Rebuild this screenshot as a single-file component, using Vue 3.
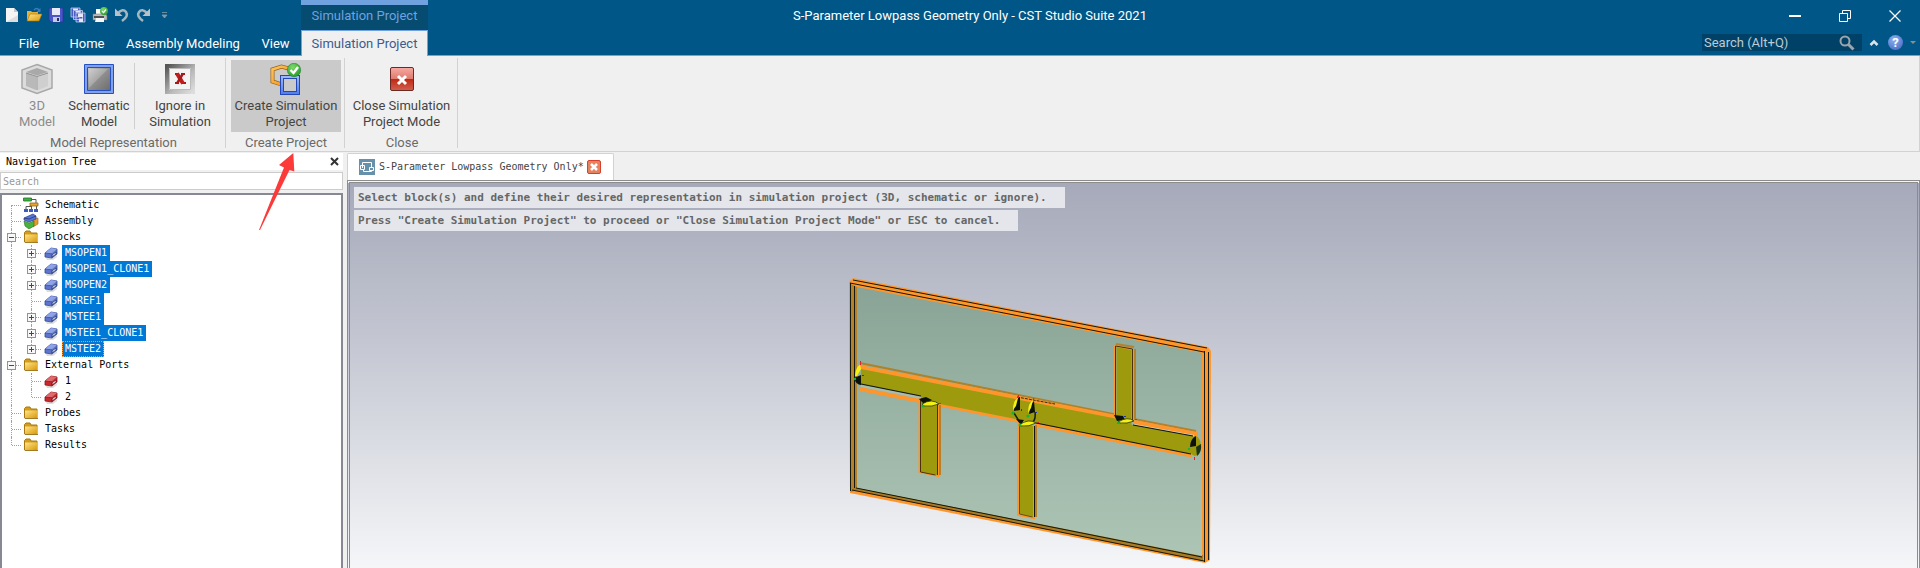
<script setup>
import { ref } from 'vue'

const quickActions = [
  { id: 'new', label: 'New' },
  { id: 'open', label: 'Open' },
  { id: 'save', label: 'Save' },
  { id: 'saveall', label: 'Save all' },
  { id: 'print', label: 'Print' },
  { id: 'undo', label: 'Undo' },
  { id: 'redo', label: 'Redo' },
]

const tabs = [
  { name: 'File', cls: 'tab-file' },
  { name: 'Home', cls: 'tab-home' },
  { name: 'Assembly Modeling', cls: 'tab-assembly' },
  { name: 'View', cls: 'tab-view' },
]

const block = (label, toggle = '+') => ({ label, toggle, icon: 'block', depth: 1, selected: true })
const rows = [
  { label: 'Schematic', icon: 'schematic', depth: 0, first: true },
  { label: 'Assembly', icon: 'assembly', depth: 0 },
  { label: 'Blocks', icon: 'folder', depth: 0, toggle: '-' },
  block('MSOPEN1'),
  block('MSOPEN1_CLONE1'),
  block('MSOPEN2'),
  block('MSREF1', ''),
  block('MSTEE1'),
  block('MSTEE1_CLONE1'),
  { ...block('MSTEE2'), last: true, focused: true },
  { label: 'External Ports', icon: 'folder', depth: 0, toggle: '-' },
  { label: '1', icon: 'port', depth: 1 },
  { label: '2', icon: 'port', depth: 1, last: true },
  { label: 'Probes', icon: 'folder', depth: 0 },
  { label: 'Tasks', icon: 'folder', depth: 0 },
  { label: 'Results', icon: 'folder', depth: 0, last: true },
]

const commandQuery = ref('')
const treeQuery = ref('')
</script>

<template>
  <div class="app">
    <svg class="sprite" aria-hidden="true">
      <defs>
        <linearGradient id="gGold" x1="0" y1="0" x2="1" y2="1"><stop offset="0" stop-color="#ffe58a" /><stop offset="1" stop-color="#d99a0c" /></linearGradient>
        <linearGradient id="gGrey" x1="0" y1="0" x2="1" y2="1"><stop offset="0" stop-color="#c9c9c9" /><stop offset=".5" stop-color="#8e8e8e" /><stop offset="1" stop-color="#6c6c6c" /></linearGradient>
        <linearGradient id="gFrame" x1="0" y1="0" x2="1" y2="1"><stop offset="0" stop-color="#555" /><stop offset=".6" stop-color="#bbb" /><stop offset="1" stop-color="#ddd" /></linearGradient>
        <linearGradient id="gRed" x1="0" y1="0" x2="0" y2="1"><stop offset="0" stop-color="#f6aba4" /><stop offset=".5" stop-color="#e0796c" /><stop offset=".52" stop-color="#c02a16" /><stop offset="1" stop-color="#d26050" /></linearGradient>
        <linearGradient id="gBlue" x1="0" y1="0" x2="0" y2="1"><stop offset="0" stop-color="#9db8f7" /><stop offset="1" stop-color="#5580ec" /></linearGradient>
        <linearGradient id="gOrange" x1="0" y1="0" x2="1" y2="1"><stop offset="0" stop-color="#ffc35c" /><stop offset="1" stop-color="#f09216" /></linearGradient>
        <radialGradient id="gGreen" cx=".4" cy=".3" r=".8"><stop offset="0" stop-color="#7edb6a" /><stop offset="1" stop-color="#209425" /></radialGradient>
      </defs>

      <symbol id="new" viewBox="0 0 16 16"><path d="M2 1h8l4 4v10H2z" fill="#f5f5f5" /><path d="M10 1l4 4h-4z" fill="#c4c9cd" /><path d="M2 15h12V8z" fill="#dedede" /></symbol>
      <symbol id="open" viewBox="0 0 16 16"><path d="M1 14V4h4l1 1h6v3H4z" fill="#e6b032" /><path d="M1 14l3-7h12l-3 7z" fill="url(#gGold)" stroke="#a8740d" stroke-width=".6" /><path d="M8 3q3-3 5 0" fill="none" stroke="#3a7fc0" stroke-width="1.4" /><path d="M14.500 1v4h-4z" fill="#3a7fc0" /></symbol>
      <symbol id="save" viewBox="0 0 16 16"><path d="M1 1h14v14H3l-2-2z" fill="#4a57c9" stroke="#2a3595" stroke-width=".8" /><path d="M4 1h8v7H4z" fill="#e8ebf8" /><path d="M5 10h7v5H5z" fill="#c9cce0" /><path d="M9 11h2v3H9z" fill="#23296b" /></symbol>
      <symbol id="saveall" viewBox="0 0 16 16"><g fill="#4b5cc5" stroke="#d7dcf5" stroke-width=".7"><path d="M1 1h9v9H1zM3.500 3.500h9v9h-9zM6 6h9v9H6z" /></g><path d="M8 6.500h5v3.500H8zM3 1.500h5v1.500H3zM5.500 4h5v1.500h-5zM9 11.500h4V15H9z" fill="#e6e9f8" /></symbol>
      <symbol id="print" viewBox="0 0 16 16"><path d="M4 2h7v6H4z" fill="#fff" /><path d="M1 7h13l1 2v4H1z" fill="#b9bcbe" stroke="#6e7274" stroke-width=".5" /><path d="M2 9h10v2H2z" fill="#4d5254" /><path d="M4 11h8v4H3z" fill="#f7f7f7" /><circle cx="12" cy="4" r="4" fill="url(#gGreen)" /><path d="M10 4l1.600 1.600L14 2.500" fill="none" stroke="#fff" stroke-width="1.300" /></symbol>
      <symbol id="undo" viewBox="0 0 16 16"><path d="M4 6q5-5 8-1 3 4-4 9" fill="none" stroke="#a9b5bc" stroke-width="2.600" /><path d="M1 1.500V9h7.500z" fill="#b7c2c8" /></symbol>
      <symbol id="redo" viewBox="0 0 16 16"><path d="M11 6q-5-5-8-1-3 4 4 9" fill="none" stroke="#a9b5bc" stroke-width="2.600" /><path d="M14 1.500V9H6.500z" fill="#b7c2c8" /></symbol>

      <symbol id="cube" viewBox="0 0 34 32"><path d="M17 1.500L32 7v18L17 30.500 2 25V7z" fill="#dcdcdc" stroke="#a8a8a8" stroke-width="1.500" /><path d="M6 9l11-4 11 4-11 3.500z" fill="#a9a9a9" /><path d="M6 10l10 3.500V27L6 23z" fill="#b9b9b9" /><path d="M28 10l-10 3.500V27l10-4z" fill="#cfcfcf" /><path d="M6 10l11 3.500 11-3.500M17 13v14" fill="none" stroke="#929292" /></symbol>
      <symbol id="square" viewBox="0 0 32 32"><path d="M1.500 1.500h29v29h-29z" fill="#81a1ed" stroke="#2450c3" /><path d="M4.500 4.500h23v23h-23z" fill="url(#gGrey)" stroke="#2450c3" /><path d="M6 25L25 6H6z" fill="#fff" opacity=".2" /></symbol>
      <symbol id="ignore" viewBox="0 0 32 32"><path d="M3 3h26v26H3z" fill="#f3f3f3" stroke="url(#gFrame)" stroke-width="4" /><path d="M5.500 5.500h21v21h-21z" fill="none" stroke="#bbb" /><path d="M11 11h4M17 11h4M11 20h4M17 20h5" stroke="#b01719" stroke-width="2" /><path d="M13 10.500l6 10" stroke="#c01c1c" stroke-width="4" /><path d="M19 10.500l-6 10" stroke="#a81919" stroke-width="2.500" /></symbol>
      <symbol id="create" viewBox="0 0 32 32"><path d="M2.500 6.500l9-3 11 3v11l-11 4-9-3z" fill="none" stroke="#9c6113" stroke-width="4" /><path d="M2.500 6.500l9-3 11 3v11l-11 4-9-3z" fill="none" stroke="url(#gOrange)" stroke-width="2.600" /><path d="M13.500 15.500h13v13h-13z" fill="#cacaca" /><path d="M12 14h16v16H12z" fill="none" stroke="#2447b8" stroke-width="4" /><path d="M12 14h16v16H12z" fill="none" stroke="url(#gBlue)" stroke-width="2" /><circle cx="24" cy="7" r="6.700" fill="url(#gGreen)" stroke="#23852a" stroke-width=".6" /><path d="M20.500 7l3 3 4.500-6" fill="none" stroke="#fff" stroke-width="2.400" /></symbol>
      <symbol id="close" viewBox="0 0 32 32"><rect x="4.500" y="4.500" width="23" height="23" rx="1.500" fill="url(#gRed)" stroke="#6b2b25" /><path d="M12 13l8 8m0-8l-8 8" stroke="#fff" stroke-width="3" /></symbol>

      <symbol id="folder" viewBox="0 0 16 16"><path d="M1.500 13V3.500L3 2h4l1 2h6v9z" fill="#d59c18" stroke="#a9780f" /><path d="M2 5.500h12V13H2z" fill="url(#gGold)" /><path d="M2 13.500h13" stroke="#a37a24" /></symbol>
      <symbol id="schematic" viewBox="0 0 16 16"><path d="M8 2.500h5V6M3 12V9.500h5M8.500 9v3M13.500 9v3" fill="none" stroke="#555" /><path d="M.5 1h8v3h-8z" fill="#3fae3f" stroke="#23722a" stroke-width=".8" /><path d="M7 6h8v3H7z" fill="#e5a52c" stroke="#94660e" stroke-width=".8" /><path d="M1 12h4v3H1zM6 12h4v3H6zM11 12h4v3h-4z" fill="#3b5bc0" /></symbol>
      <symbol id="assembly" viewBox="0 0 16 16"><path d="M10 6l5-1v6l-5 3z" fill="#e49b25" stroke="#a46a12" stroke-width=".6" /><path d="M1 8l5 2 5-2v5l-5 3-4-3z" fill="#48b33d" stroke="#24711f" stroke-width=".6" /><path d="M1 5l9-4 3 2v3L6 9 1 7z" fill="#5775d5" stroke="#263c8b" stroke-width=".7" /><path d="M1 5l5 1 7-3" fill="none" stroke="#1e2f70" stroke-width=".7" /></symbol>
      <symbol id="block" viewBox="0 0 16 16"><path d="M3 13h7l4-3v2l-4 3H4z" fill="#bbb" opacity=".5" /><path d="M2 8l6-5 6 1v5l-5 4-7-1z" fill="#5c75cc" stroke="#314891" stroke-width=".8" /><path d="M2 8l6-5 6 1-5 4z" fill="#8ea3e6" /><path d="M9 10l4-3v2l-4 3z" fill="#e8ecf8" stroke="#23326c" stroke-width=".7" /><path d="M2 8l7 1v4" fill="none" stroke="#384e9c" stroke-width=".6" /></symbol>
      <symbol id="port" viewBox="0 0 16 16"><path d="M3 13h7l4-3v2l-4 3H4z" fill="#bbb" opacity=".5" /><path d="M2 8l6-5 6 1v5l-5 4-7-1z" fill="#c62a30" stroke="#86151a" stroke-width=".8" /><path d="M2 8l6-5 6 1-5 4z" fill="#dd6a6e" /><path d="M9 10l4-3v2l-4 3z" fill="#fff" stroke="#6d1014" stroke-width=".7" /><path d="M2 8l7 1v4" fill="none" stroke="#98191d" stroke-width=".6" /></symbol>
    </svg>

    <header class="titlebar">
      <div class="title-left">
        <div class="quick">
          <button v-for="a in quickActions" :key="a.id" type="button" :aria-label="a.label">
            <svg width="16" height="16"><use :href="'#' + a.id" /></svg>
          </button>
          <button type="button" class="quick-more" aria-label="Customize toolbar">
            <svg width="7" height="8" viewBox="0 0 7 8"><path d="M1 1.500h5M1 4l2.500 3L6 4z" fill="#8799a5" stroke="#8799a5" stroke-width=".8" /></svg>
          </button>
        </div>
        <div class="context">Simulation Project</div>
      </div>
      <h1>S-Parameter Lowpass Geometry Only - CST Studio Suite 2021</h1>
      <div class="window-controls">
        <button type="button" aria-label="Minimize"><svg width="12" height="12"><path d="M0 6h12" stroke="#fff" stroke-width="2" /></svg></button>
        <button type="button" aria-label="Restore"><svg width="12" height="12" fill="none" stroke="#fff"><path d="M.5 3.500h8v8h-8zM3.500 3V.5h8v8H9" /></svg></button>
        <button type="button" aria-label="Close"><svg width="12" height="12"><path d="M.5.5l11 11m0-11l-11 11" stroke="#fff" stroke-width="1.200" /></svg></button>
      </div>
    </header>

    <nav class="tabs">
      <button v-for="t in tabs" :key="t.name" type="button" :class="t.cls">{{ t.name }}</button>
      <button type="button" class="active">Simulation Project</button>
      <div class="tab-tools">
        <label class="command-search">
          <input v-model="commandQuery" type="text" placeholder="Search (Alt+Q)" aria-label="Search commands" />
          <svg width="16" height="16" fill="none" stroke="#9aa5ac"><circle cx="6" cy="6" r="4.500" stroke-width="2" /><path d="M9.500 9.500l5 5" stroke-width="3" /></svg>
        </label>
        <button type="button" class="collapse" aria-label="Collapse ribbon"><svg width="10" height="8"><path d="M1.500 6L5 2.500 8.500 6" fill="none" stroke="#dbe3e8" stroke-width="2.500" /></svg></button>
        <button type="button" class="help" aria-label="Help">?</button>
        <button type="button" class="help-more" aria-label="Help menu"><svg width="6" height="4"><path d="M0 0h6L3 3z" fill="#8c8c8c" /></svg></button>
      </div>
    </nav>

    <section class="ribbon">
      <div class="group group-model">
        <div class="commands">
          <button type="button" class="cmd cmd-3d" disabled><svg width="34" height="32"><use href="#cube" /></svg><span>3D<br />Model</span></button>
          <button type="button" class="cmd cmd-schematic"><svg width="32" height="32"><use href="#square" /></svg><span>Schematic<br />Model</span></button>
          <i class="divider"></i>
          <button type="button" class="cmd cmd-ignore"><svg width="32" height="32"><use href="#ignore" /></svg><span>Ignore in<br />Simulation</span></button>
        </div>
        <h2>Model Representation</h2>
      </div>
      <div class="group group-create">
        <div class="commands">
          <button type="button" class="cmd cmd-create"><svg width="32" height="32"><use href="#create" /></svg><span>Create Simulation<br />Project</span></button>
        </div>
        <h2>Create Project</h2>
      </div>
      <div class="group group-close">
        <div class="commands">
          <button type="button" class="cmd cmd-close"><svg width="32" height="32"><use href="#close" /></svg><span>Close Simulation<br />Project Mode</span></button>
        </div>
        <h2>Close</h2>
      </div>
    </section>

    <main class="workspace">
      <aside class="nav">
        <div class="nav-head">
          <h2>Navigation Tree</h2>
          <button type="button" aria-label="Close navigation tree"><svg width="9" height="9"><path d="M1 1l7 7m0-7L1 8" stroke="#333" stroke-width="2" /></svg></button>
        </div>
        <input v-model="treeQuery" class="nav-search" type="text" placeholder="Search" aria-label="Search the tree" />
        <ul class="tree">
          <li v-for="r in rows" :key="r.label">
            <span v-if="r.depth" class="gutter pass"></span>
            <span class="gutter branch" :class="{ start: r.first, end: r.last }">
              <button v-if="r.toggle" type="button" :aria-label="'Toggle ' + r.label">
                <svg width="9" height="9"><path :d="r.toggle === '+' ? 'M2 4.500h5M4.500 2v5' : 'M2 4.500h5'" stroke="#2c4a9b" /></svg>
              </button>
            </span>
            <svg class="node-icon" width="16" height="16"><use :href="'#' + r.icon" /></svg>
            <span class="label" :class="{ selected: r.selected, focused: r.focused }">{{ r.label }}</span>
          </li>
        </ul>
      </aside>

      <section class="document">
        <div class="doc-tab">
          <svg width="16" height="16" fill="none" stroke="#fff"><path d="M0 0h16v16H0z" fill="#6791aa" stroke="none" /><path d="M3.500 9V3.500h9V8M4.500 11v1.500h8v-1M1.500 6.500h4v4h-4zM10.500 8.500h4v3h-4z" /></svg>
          <span>S-Parameter Lowpass Geometry Only*</span>
          <button type="button" aria-label="Close document"><svg width="14" height="14"><rect x=".5" y=".5" width="13" height="13" rx="1.500" fill="#e58260" stroke="#d6402c" /><path d="M4 4l6 6m0-6l-6 6" stroke="#fff" stroke-width="2.500" /></svg></button>
        </div>
        <div class="viewport">
          <svg class="model" viewBox="350 183 1567 384" preserveAspectRatio="xMidYMin meet" role="img" aria-label="Lowpass filter model">
            <defs>
              <linearGradient id="gGlass" x1="0" y1="0" x2="0" y2="1"><stop offset="0" stop-color="#89a496" /><stop offset="1" stop-color="#adc5b5" /></linearGradient>
            </defs>
            <path d="M849 282l4-4 355 69 3 4-1 209-5 3-355-70z" fill="#ff962b" />
            <path d="M851 284l6 3v203l-6 2z" fill="#b5822a" />
            <path d="M852 490l5-4 346 69v6z" fill="#a87b24" />
            <path d="M857 287l345 66v203l-345-68z" fill="url(#gGlass)" />
            <g fill="none" stroke="#15180b">
              <path d="M850.500 283v208M854.500 286v202" />
              <path d="M853 280l354 68M850 283l354 69" />
              <path d="M1204.500 351v211M1208.500 352v208" />
              <path d="M852 490l352 71M856 488l346 69" />
            </g>

            <path d="M860 363l258 52" stroke="#ad8228" stroke-width="2" />
            <path d="M860 367l256 50" stroke="#ff962b" stroke-width="4" />
            <path d="M860 389l60 12" stroke="#ff962b" stroke-width="4" />
            <path d="M861 386l60 12" stroke="#a7bcab" stroke-width="2" />
            <path d="M940 405l78 16M1036 425l156 31" stroke="#ff962b" stroke-width="3" />
            <path d="M1134 419l62 12" stroke="#b5822a" stroke-width="2" />
            <path d="M1134 422l62 12v4" fill="none" stroke="#ff962b" stroke-width="4" />
            <path d="M1134 425l60 11" stroke="#c9d8ce" stroke-width="2" />

            <path d="M919.500 398v74l19 4V404" fill="none" stroke="#ff962b" stroke-width="2" />
            <path d="M940 405v70" stroke="#b5822a" stroke-width="2" />
            <path d="M921 395l16 6v74l-16-3z" fill="#9d9b0d" />
            <path d="M920.500 399v73l15 3M937.500 404v71" fill="none" stroke="#4d3010" />
            <path d="M1018 422v93l16 3v-93" fill="none" stroke="#ff962b" stroke-width="2" />
            <path d="M1036 425v92" stroke="#b5822a" stroke-width="2" />
            <path d="M1020 422l13 4v91l-13-3z" fill="#9d9b0d" />
            <path d="M1019.500 424v90l13 3" fill="none" stroke="#6b4a12" />
            <path d="M1034.500 426v91" stroke="#15100a" />
            <path d="M1116 344l18 3" stroke="#b5822a" stroke-width="2" />
            <path d="M1135 349v71" stroke="#b5822a" stroke-width="2" />
            <path d="M1115 419v-73l18 4v70" fill="none" stroke="#ff962b" stroke-width="2" />
            <path d="M1116.500 347l15 3v75l-15-7z" fill="#9d9b0d" />
            <path d="M1115.500 416v-70l17 3v73" fill="none" stroke="#4a3010" />

            <path d="M861 369l252 49 20 7 60 11-2 18-251-50-19-8-60-12z" fill="#9d9b0d" />
            <path d="M861 384l60 12M1133 425l60 11M1036 423l155 31" fill="none" stroke="#111" stroke-width="1.200" />
            <path d="M1017 397l38 7" stroke="#3a2c10" stroke-dasharray="3 1" />

            <path d="M855 376q1-10 5-11l1 4-4 7z" fill="#f4f113" /><path d="M854 378l7-3v10q-5 0-7-7z" fill="#0b120c" />
            <path d="M919 399l7-2 6 3-8 4z" fill="#0b120c" /><path d="M922 404q10-6 17 0-7 3-15 2z" fill="#f4f113" stroke="#26330e" stroke-width=".8" />
            <path d="M1014 411q0-11 6-14v13zM1029 414q1-10 5-13l1 11z" fill="#0b120c" /><path d="M1013 410q0-10 5-12l-2 8zM1028 413q0-10 5-13l-2 8z" fill="#f4f113" />
            <path d="M1014 413l5 8M1035 412q1 8-3 11" fill="none" stroke="#10200f" stroke-width="1.500" />
            <path d="M1016 419l8 1-3 5z" fill="#0b120c" /><path d="M1019 425q10-7 17-2-7 4-15 3z" fill="#f4f113" stroke="#26330e" stroke-width=".8" />
            <path d="M1114 415l9 1 2 4-8 1z" fill="#0b120c" /><path d="M1118 422q10-6 16-1-7 3-14 2z" fill="#f4f113" stroke="#26330e" stroke-width=".8" />
            <ellipse cx="1195" cy="446" rx="6" ry="10" fill="#9d9b0d" /><path d="M1190 447q0-8 6-11v10z" fill="#0b120c" /><path d="M1196 447l5-3q1 8-4 12z" fill="#18351a" />
            <g fill="#e5222a"><path d="M860 361h1v4h-1zM939 403h2v1h-2zM1018 395h1v3h-1zM1033 398h1v3h-1zM1037 422h2v1h-2zM1135 419h2v1h-2zM1194 457h1v3h-1z" /></g>
            <g fill="#13b43b"><circle cx="855" cy="379" r="1.200" /><circle cx="923" cy="406" r="1.500" /><circle cx="1013" cy="413" r="1.500" /><circle cx="1028" cy="416" r="1.500" /><circle cx="1020" cy="425" r="1.500" /><circle cx="1118" cy="423" r="1.200" /><circle cx="1189" cy="449" r="1.200" /></g>
            <g fill="#2033c0"><path d="M862 375h2v1h-2zM1021 409h1v2h-1zM1036 412h1v1h-1zM1124 416h2v1h-2z" /></g>
          </svg>
          <p>Select block(s) and define their desired representation in simulation project (3D, schematic or ignore).</p>
          <p>Press "Create Simulation Project" to proceed or "Close Simulation Project Mode" or ESC to cancel.</p>
        </div>
      </section>
      <svg class="pointer" width="36" height="79" viewBox="259 152 36 79" aria-hidden="true"><path d="M293.300 153L279 165l5 2.500L259 230h1l29.500-60 4.800 1.500z" fill="#fc3a3a" /></svg>
    </main>
  </div>
</template>

<style>
html,
body {
  background: #f0f0f0;
}
</style>

<style scoped>
.app {
  display: flex;
  flex-direction: column;
  height: 100vh;
  min-height: 480px;
  overflow: hidden;
  background: #f0f0f0;
  color: #444;
  font: 13px/16px Roboto, "Noto Sans", sans-serif;
}
.app * {
  box-sizing: border-box;
}
.sprite {
  position: absolute;
  width: 0;
  height: 0;
}
svg {
  display: block;
  flex: none;
}
button,
input {
  margin: 0;
  padding: 0;
  border: 0;
  background: none;
  color: inherit;
  font: inherit;
}
h1,
h2,
p,
ul {
  margin: 0;
  padding: 0;
  font: inherit;
}
.titlebar {
  display: grid;
  grid-template-columns: 1fr auto 1fr;
  height: 30px;
  background: #005687;
  color: #fff;
}
.title-left {
  display: flex;
}
.quick {
  display: flex;
  align-items: center;
  gap: 6px;
  width: 301px;
  padding: 0 0 2px 4px;
}
.quick-more {
  padding-left: 3px;
}
.context {
  width: 127px;
  border-top: 5px solid #6fa2df;
  background: #064b70;
  color: #6fa2df;
  line-height: 22px;
  text-align: center;
}
h1 {
  padding-left: 20px;
  line-height: 32px;
}
.window-controls {
  display: flex;
  justify-content: flex-end;
}
.window-controls button {
  display: grid;
  place-items: center;
  width: 50px;
}
.tabs {
  display: flex;
  height: 26px;
  border-bottom: 1px solid #6fa2df;
  background: #005687;
  color: #fff;
}
.tabs > button {
  padding-top: 2px;
}
.tab-file { width: 58px; }
.tab-home { width: 58px; }
.tab-assembly { width: 134px; }
.tab-view { width: 51px; }
.tabs > .active {
  width: 127px;
  height: 26px;
  padding-top: 0;
  border: 1px solid #6fa2df;
  border-bottom: 0;
  background: #f0f0f0;
  color: #3b5b92;
}
.tab-tools {
  display: flex;
  align-items: center;
  margin-left: auto;
  padding-right: 4px;
}
.command-search {
  display: flex;
  align-items: center;
  width: 160px;
  height: 17px;
  padding: 0 7px 0 2px;
  background: #004168;
}
.command-search input {
  flex: 1;
  min-width: 0;
  height: 17px;
}
.command-search input::placeholder {
  color: #bccbd5;
  opacity: 1;
}
.collapse {
  margin-left: 7px;
}
.help {
  width: 15px;
  height: 15px;
  margin: 0 7px 0 9px;
  border-radius: 50%;
  background: radial-gradient(circle at 40% 30%, #8db0f0, #3d62bd);
  font-weight: 700;
  line-height: 15px;
}
.ribbon {
  display: flex;
  height: 96px;
  padding-top: 2px;
  border-right: 1px solid #d2d2d2;
  border-bottom: 1px solid #d2d2d2;
}
.group {
  display: flex;
  flex-direction: column;
  height: 90px;
  border-right: 1px solid #d2d2d2;
}
.commands {
  display: flex;
  flex: none;
  height: 77px;
  padding-top: 2px;
}
.group h2 {
  padding-left: 2px;
  color: #6a6a6a;
  text-align: center;
}
.cmd {
  display: flex;
  flex-direction: column;
  align-items: center;
  gap: 3px;
  height: 72px;
  padding-top: 3px;
}
.cmd:disabled {
  color: #8c8c8c;
}
.group-model { width: 226px; }
.group-create { width: 119px; }
.group-close { width: 113px; }
.group-model .commands { padding-left: 8px; }
.group-create .commands { padding-left: 5px; }
.group-close .commands { padding-left: 2px; }
.cmd-3d { width: 58px; }
.cmd-schematic { width: 66px; }
.cmd-ignore { width: 76px; }
.cmd-create {
  width: 110px;
  background: #cacaca;
}
.cmd-close { width: 109px; }
.divider {
  width: 1px;
  height: 66px;
  margin: 3px 7px 0 2px;
  background: #d0d0d0;
}
.workspace {
  position: relative;
  display: flex;
  flex: 1;
  gap: 4px;
  min-height: 0;
  padding-top: 1px;
}
.nav {
  display: flex;
  flex-direction: column;
  width: 343px;
  color: #000;
  font: 10px/16px "DejaVu Sans Mono", "Liberation Mono", monospace;
}
.nav-head {
  display: flex;
  align-items: center;
  justify-content: space-between;
  height: 17px;
  padding: 0 4px 0 6px;
  background: #fff;
}
.nav-search {
  height: 18px;
  margin: 2px 0 3px;
  padding: 0 2px;
  border: 1px solid #ccc;
  background: #fff;
}
.nav-search::placeholder {
  color: #999;
  opacity: 1;
}
.tree {
  flex: 1;
  padding-top: 2px;
  border: 2px solid #868991;
  border-bottom: 0;
  background: #fff;
  list-style: none;
}
.tree li {
  display: flex;
  align-items: center;
  height: 16px;
}
.gutter {
  position: relative;
  width: 19px;
  height: 16px;
}
.pass {
  margin-right: 1px;
}
.gutter::before {
  content: "";
  position: absolute;
  top: 0;
  bottom: 0;
  left: 9px;
  border-left: 1px dotted #a0a0a0;
}
.branch::after {
  content: "";
  position: absolute;
  top: 8px;
  right: 0;
  left: 10px;
  border-top: 1px dotted #a0a0a0;
}
.branch.start::before {
  top: 8px;
}
.branch.end::before {
  bottom: 8px;
}
.gutter button {
  position: absolute;
  z-index: 1;
  top: 4px;
  left: 5px;
  width: 9px;
  height: 9px;
  outline: 1px solid #939393;
  outline-offset: -1px;
  background: #f8f8f8;
}
.node-icon {
  margin: 0 3px 0 2px;
}
.label {
  height: 16px;
  padding: 0 3px;
  white-space: nowrap;
}
.selected {
  background: #0078d7;
  color: #fff;
}
.focused {
  outline: 1px dotted #ff9a3c;
  outline-offset: -1px;
}
.document {
  display: flex;
  flex: 1;
  flex-direction: column;
  min-width: 0;
}
.doc-tab {
  display: flex;
  align-items: center;
  align-self: flex-start;
  height: 27px;
  padding: 0 12px 0 11px;
  border: 1px solid #d2d2d2;
  border-bottom: 0;
  border-radius: 2px 2px 0 0;
  background: #fff;
  font: 10px/16px "DejaVu Sans Mono", "Liberation Mono", monospace;
}
.doc-tab span {
  margin: 0 3px 0 4px;
}
.viewport {
  position: relative;
  display: flex;
  flex: 1;
  flex-direction: column;
  align-items: flex-start;
  gap: 2px;
  min-height: 0;
  padding: 4px;
  border: 3px double #8c8c8c;
  border-bottom: 0;
  background: linear-gradient(#a5a9b9, #c3c6d1 40%, #f5f6f8);
}
.viewport p {
  position: relative;
  padding: 0 18px 0 4px;
  background: #e4e6eb;
  color: #666;
  font: bold 11px/21px "DejaVu Sans Mono", "Liberation Mono", monospace;
}
.model {
  position: absolute;
  top: 0;
  left: 0;
  width: 100%;
}
.pointer {
  position: absolute;
  top: 0;
  left: 259px;
}
</style>
